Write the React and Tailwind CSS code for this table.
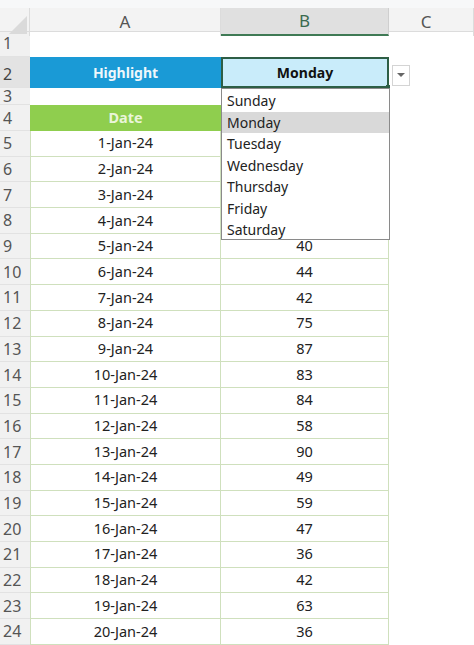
import React from "react";

const values = [null, null, null, null, 40, 44, 42, 75, 87, 83, 84, 58, 90, 49, 59, 47, 36, 42, 63, 36];
const days = ["Sunday", "Monday", "Tuesday", "Wednesday", "Thursday", "Friday", "Saturday"];

const RowHead = ({ n, active, center }) => (
  <div
    className={
      "flex justify-start pl-[3px] text-[16px] leading-none border-b border-[#e2e2e2] " +
      (center ? "items-center " : "items-end pb-[5px] ") +
      (active ? "bg-[#e3e3e3] text-[#444]" : "bg-[#f1f1f1] text-[#555]")
    }
  >
    {n}
  </div>
);

const App = () => {
  return (
    <div
      className="w-[474px] h-[645px] overflow-hidden bg-white relative"
      style={{ fontFamily: '"Noto Sans", "Open Sans", sans-serif' }}
    >
      <div className="h-[8px] bg-[#f7f8f9]" />
      {/* column headers */}
      <div className="grid grid-cols-[30px_191px_168px_1fr] h-[24px] bg-[#f3f3f3] border-b border-[#dcdcdc] text-[17px] text-[#555]">
        <div className="relative border-r border-[#dcdcdc]">
          <div className="absolute right-[2px] bottom-[2px] w-0 h-0 border-l-[18px] border-l-transparent border-b-[18px] border-b-[#dadada]" />
        </div>
        <div className="flex items-center justify-center border-r border-[#dcdcdc]">A</div>
        <div className="flex items-center justify-center bg-[#e0e0e0] text-[#3a6b4f] border-b-2 border-[#3f7a55] border-r border-r-[#cfcfcf]">B</div>
        <div className="flex items-center justify-center border-r border-[#dcdcdc] pr-[10px]">C</div>
      </div>

      <div className="grid grid-cols-[30px_191px_168px_1fr] grid-rows-[25px_31px_17px_26px_repeat(20,25.7px)] text-[14.5px] text-[#222]">
        {/* row 1 */}
        <RowHead n={1} />
        <div />
        <div />
        <div />
        {/* row 2 */}
        <RowHead n={2} active />
        <div className="flex items-center justify-center bg-[#1a9ad6] text-[#eef7fb] font-bold text-[14px]">Highlight</div>
        <div className="relative flex items-center justify-center bg-[#c9ecfa] border-2 border-[#2d5e45] font-bold text-[#111] text-[14px]">
          Monday
          <div className="absolute -right-[3px] -bottom-[3px] w-[4px] h-[4px] bg-[#2d5e45]" />
        </div>
        <div className="flex items-center pl-[3px] pt-[5px]">
          <div className="w-[18px] h-[21px] bg-white border border-[#d4d4d4] flex items-center justify-center">
            <div className="w-0 h-0 border-l-[4px] border-r-[4px] border-t-[4px] border-l-transparent border-r-transparent border-t-[#666]" />
          </div>
        </div>
        {/* row 3 */}
        <RowHead n={3} center />
        <div />
        <div />
        <div />
        {/* row 4 */}
        <RowHead n={4} center />
        <div className="flex items-center justify-center bg-[#8fce4e] text-[#eaf5d9] font-bold">Date</div>
        <div className="bg-[#8fce4e]" />
        <div />
        {values.map((v, i) => (
          <React.Fragment key={i}>
            <RowHead n={i + 5} center />
            <div className="flex items-center justify-center border-b border-r border-l border-[#cfe0bd]">
              {i + 1}-Jan-24
            </div>
            <div className="flex items-center justify-center border-b border-r border-[#cfe0bd]">{v}</div>
            <div />
          </React.Fragment>
        ))}
      </div>

      {/* data validation list */}
      <div className="absolute left-[221px] top-[88px] w-[169px] h-[152px] bg-white border border-[#8a8a8a] text-[14px] text-[#222] py-[1px]">
        {days.map((d) => (
          <div
            key={d}
            className={"h-[21.5px] flex items-center pl-[5px] " + (d === "Monday" ? "bg-[#d9d9d9]" : "")}
          >
            {d}
          </div>
        ))}
      </div>
    </div>
  );
};

export default App;
